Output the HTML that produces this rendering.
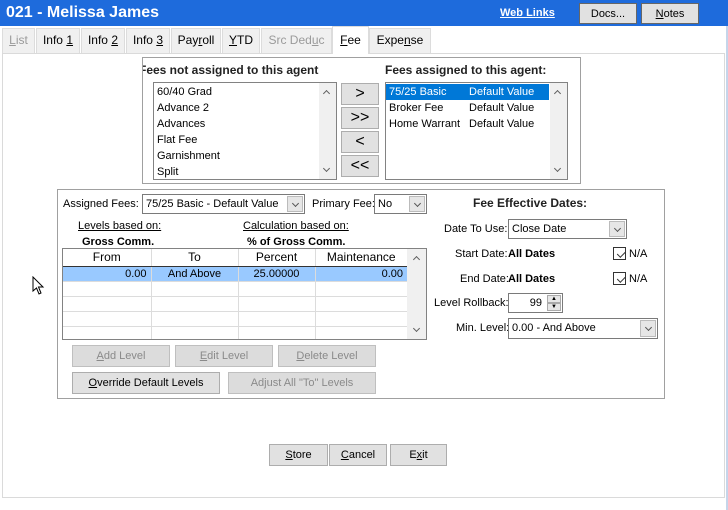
<!DOCTYPE html>
<html><head><meta charset="utf-8"><style>
*{box-sizing:border-box;margin:0;padding:0}
body{width:728px;height:510px;background:#fff;font-family:"Liberation Sans",Arial,sans-serif;font-size:11px;color:#000;position:relative;overflow:hidden}
.a{position:absolute}
.title{left:0;top:0;width:728px;height:26px;background:#1e6bdc}
.tab{position:absolute;top:28px;height:25px;background:#f0f0f0;border:1px solid #dcdcdc;border-bottom:none;font-size:12px;line-height:23px;text-align:center}
.btn{position:absolute;background:#e1e1e1;border:1px solid #adadad;text-align:center;font-size:11px;line-height:20px;color:#000}
.btn.dis{color:#8a8a8a;background:#dcdcdc;border-color:#bfbfbf}
.sel{position:absolute;background:#fff;border:1px solid #7a7a7a;font-size:11px;line-height:19px;padding-left:3px}
.dd{position:absolute;right:1px;top:1px;bottom:1px;width:16px;background:#e6e6e6;border:1px solid #bbb}
.dd:after{content:"";position:absolute;left:5px;top:4px;width:4px;height:4px;border-right:1px solid #555;border-bottom:1px solid #555;transform:rotate(45deg)}
.list{position:absolute;background:#fff;border:1px solid #828282}
.it{height:16px;line-height:16px;padding-left:3px;font-size:11px}
.sb{position:absolute;right:0;top:0;bottom:0;width:17px;background:#f0f0f0}
.up,.dn{position:absolute;left:5px;width:5px;height:5px;border-left:1px solid #606060;border-top:1px solid #606060}
.up{top:8px;transform:rotate(45deg)}.dn{bottom:8px;transform:rotate(225deg)}
.grid td{border-right:1px solid #dcdcdc;border-bottom:1px solid #dcdcdc;height:15px;font-size:11px;padding:0 4px}
.cb{position:absolute;width:13px;height:13px;border:1px solid #333;background:#fff}
.cb:after{content:"";position:absolute;left:2px;top:0px;width:7px;height:4px;border-left:1px solid #333;border-bottom:1px solid #333;transform:rotate(-45deg) translate(-1px,3px)}
</style></head><body>
<div class="a title"></div>
<div class="a" style="left:6px;top:4px;color:#fff;font-weight:bold;font-size:16px">021 - Melissa James</div>
<div class="a" style="left:500px;top:7px;color:#fff;font-weight:bold;font-size:11px;text-decoration:underline">Web Links</div>
<div class="btn" style="left:579px;top:3px;width:58px;height:21px;border-color:#666">Docs...</div>
<div class="btn" style="left:641px;top:3px;width:58px;height:21px;border-color:#666"><u>N</u>otes</div>

<div class="a" style="left:2px;top:53px;width:723px;height:445px;border:1px solid #dadada"></div>
<div class="a" style="left:726px;top:26px;width:2px;height:484px;background:#c5d5ea"></div>

<div class="tab" style="left:2px;width:33px;color:#9a9a9a"><u>L</u>ist</div>
<div class="tab" style="left:36px;width:44px">Info <u>1</u></div>
<div class="tab" style="left:81px;width:44px">Info <u>2</u></div>
<div class="tab" style="left:126px;width:44px">Info <u>3</u></div>
<div class="tab" style="left:171px;width:50px">Pay<u>r</u>oll</div>
<div class="tab" style="left:222px;width:38px"><u>Y</u>TD</div>
<div class="tab" style="left:261px;width:71px;color:#9a9a9a">Src Ded<u>u</u>c</div>
<div class="tab" style="left:332px;top:26px;height:28px;width:37px;background:#fff;line-height:26px"><u>F</u>ee</div>
<div class="tab" style="left:369px;width:62px">Expe<u>n</u>se</div>

<!-- top box -->
<div class="a" style="left:142px;top:57px;width:439px;height:127px;border:1px solid #a0a0a0"></div>
<div class="a" style="left:143px;top:63px;font-weight:bold;font-size:12px;color:#222;width:195px;overflow:hidden;white-space:nowrap;text-indent:-4px">Fees not assigned to this agent</div>
<div class="a" style="left:385px;top:63px;font-weight:bold;font-size:12px;color:#222">Fees assigned to this agent:</div>
<div class="list" style="left:153px;top:82px;width:184px;height:98px;padding-top:1px">
<div class="it">60/40 Grad</div><div class="it">Advance 2</div><div class="it">Advances</div><div class="it">Flat Fee</div><div class="it">Garnishment</div><div class="it">Split</div>
<div class="sb"><div class="up"></div><div class="dn"></div></div></div>
<div class="btn" style="left:341px;top:83px;width:38px;height:22px;font-size:16px">&gt;</div>
<div class="btn" style="left:341px;top:107px;width:38px;height:22px;font-size:16px">&gt;&gt;</div>
<div class="btn" style="left:341px;top:131px;width:38px;height:22px;font-size:16px">&lt;</div>
<div class="btn" style="left:341px;top:155px;width:38px;height:22px;font-size:16px">&lt;&lt;</div>
<div class="list" style="left:385px;top:82px;width:183px;height:98px;padding-top:1px">
<div class="it" style="background:#0078d7;color:#fff;width:163px">75/25 Basic<span class="a" style="left:83px">Default Value</span></div>
<div class="it" style="position:relative">Broker Fee<span class="a" style="left:83px">Default Value</span></div>
<div class="it" style="position:relative">Home Warrant<span class="a" style="left:83px">Default Value</span></div>
<div class="sb"><div class="up"></div><div class="dn"></div></div></div>

<!-- lower box -->
<div class="a" style="left:57px;top:189px;width:608px;height:210px;border:1px solid #a0a0a0"></div>
<div class="a" style="left:63px;top:198px">Assigned Fees:</div>
<div class="sel" style="left:142px;top:194px;width:163px;height:20px">75/25 Basic - Default Value<div class="dd"></div></div>
<div class="a" style="left:312px;top:198px">Primary Fee:</div>
<div class="sel" style="left:374px;top:194px;width:53px;height:20px">No<div class="dd"></div></div>
<div class="a" style="left:78px;top:220px;text-decoration:underline">Levels based on:</div>
<div class="a" style="left:243px;top:220px;text-decoration:underline">Calculation based on:</div>
<div class="a" style="left:82px;top:236px;font-weight:bold">Gross Comm.</div>
<div class="a" style="left:247px;top:236px;font-weight:bold">% of Gross Comm.</div>
<div class="a" style="left:62px;top:248px;width:365px;height:92px;border:1px solid #828282;background:#fff;overflow:hidden">
<table class="grid" style="border-collapse:collapse;width:345px;table-layout:fixed">
<tr style="font-size:12px"><td style="width:88px;text-align:center;font-size:12px;border-bottom:1px solid #333;height:17px">From</td><td style="width:87px;text-align:center;font-size:12px;border-bottom:1px solid #333">To</td><td style="width:77px;text-align:center;font-size:12px;border-bottom:1px solid #333">Percent</td><td style="text-align:center;font-size:12px;border-bottom:1px solid #333">Maintenance</td></tr>
<tr style="background:#99c9ff"><td style="text-align:right">0.00</td><td style="text-align:center">And Above</td><td style="text-align:center">25.00000</td><td style="text-align:right">0.00</td></tr>
<tr><td></td><td></td><td></td><td></td></tr><tr><td></td><td></td><td></td><td></td></tr><tr><td></td><td></td><td></td><td></td></tr><tr><td></td><td></td><td></td><td></td></tr>
</table>
<div class="sb" style="width:19px"><div class="up" style="left:7px"></div><div class="dn" style="left:7px"></div></div></div>
<div class="btn dis" style="left:72px;top:345px;width:98px;height:22px"><u>A</u>dd Level</div>
<div class="btn dis" style="left:175px;top:345px;width:98px;height:22px"><u>E</u>dit Level</div>
<div class="btn dis" style="left:278px;top:345px;width:98px;height:22px"><u>D</u>elete Level</div>
<div class="btn" style="left:72px;top:372px;width:148px;height:22px"><u>O</u>verride Default Levels</div>
<div class="btn dis" style="left:228px;top:372px;width:148px;height:22px">Adjust All "To" Levels</div>

<div class="a" style="left:473px;top:196px;font-weight:bold;font-size:12px;color:#222">Fee Effective Dates:</div>
<div class="a" style="left:444px;top:223px">Date To Use:</div>
<div class="sel" style="left:508px;top:219px;width:119px;height:20px">Close Date<div class="dd"></div></div>
<div class="a" style="left:455px;top:248px">Start Date:</div><div class="a" style="left:508px;top:248px;font-weight:bold">All Dates</div>
<div class="cb" style="left:613px;top:247px"></div><div class="a" style="left:629px;top:248px">N/A</div>
<div class="a" style="left:460px;top:273px">End Date:</div><div class="a" style="left:508px;top:273px;font-weight:bold">All Dates</div>
<div class="cb" style="left:613px;top:272px"></div><div class="a" style="left:629px;top:273px">N/A</div>
<div class="a" style="left:434px;top:297px">Level Rollback:</div>
<div class="sel" style="left:508px;top:293px;width:55px;height:20px;text-align:right;padding-right:20px">99
<div class="a" style="right:1px;top:1px;width:14px;height:8px;background:#e6e6e6;border:1px solid #aaa;font-size:6px;line-height:6px;text-align:center">▲</div>
<div class="a" style="right:1px;top:9px;width:14px;height:8px;background:#e6e6e6;border:1px solid #aaa;font-size:6px;line-height:6px;text-align:center">▼</div></div>
<div class="a" style="left:456px;top:322px">Min. Level:</div>
<div class="sel" style="left:508px;top:318px;width:150px;height:21px">0.00 - And Above<div class="dd"></div></div>

<div class="btn" style="left:269px;top:444px;width:59px;height:22px"><u>S</u>tore</div>
<div class="btn" style="left:329px;top:444px;width:58px;height:22px"><u>C</u>ancel</div>
<div class="btn" style="left:390px;top:444px;width:57px;height:22px">E<u>x</u>it</div>

<svg class="a" style="left:32px;top:276px" width="14" height="20" viewBox="0 0 14 20"><path d="M1 1 L1 15 L4.5 12 L7 18 L9 17 L6.5 11 L11 11 Z" fill="#fff" stroke="#000" stroke-width="1"/></svg>
</body></html>
